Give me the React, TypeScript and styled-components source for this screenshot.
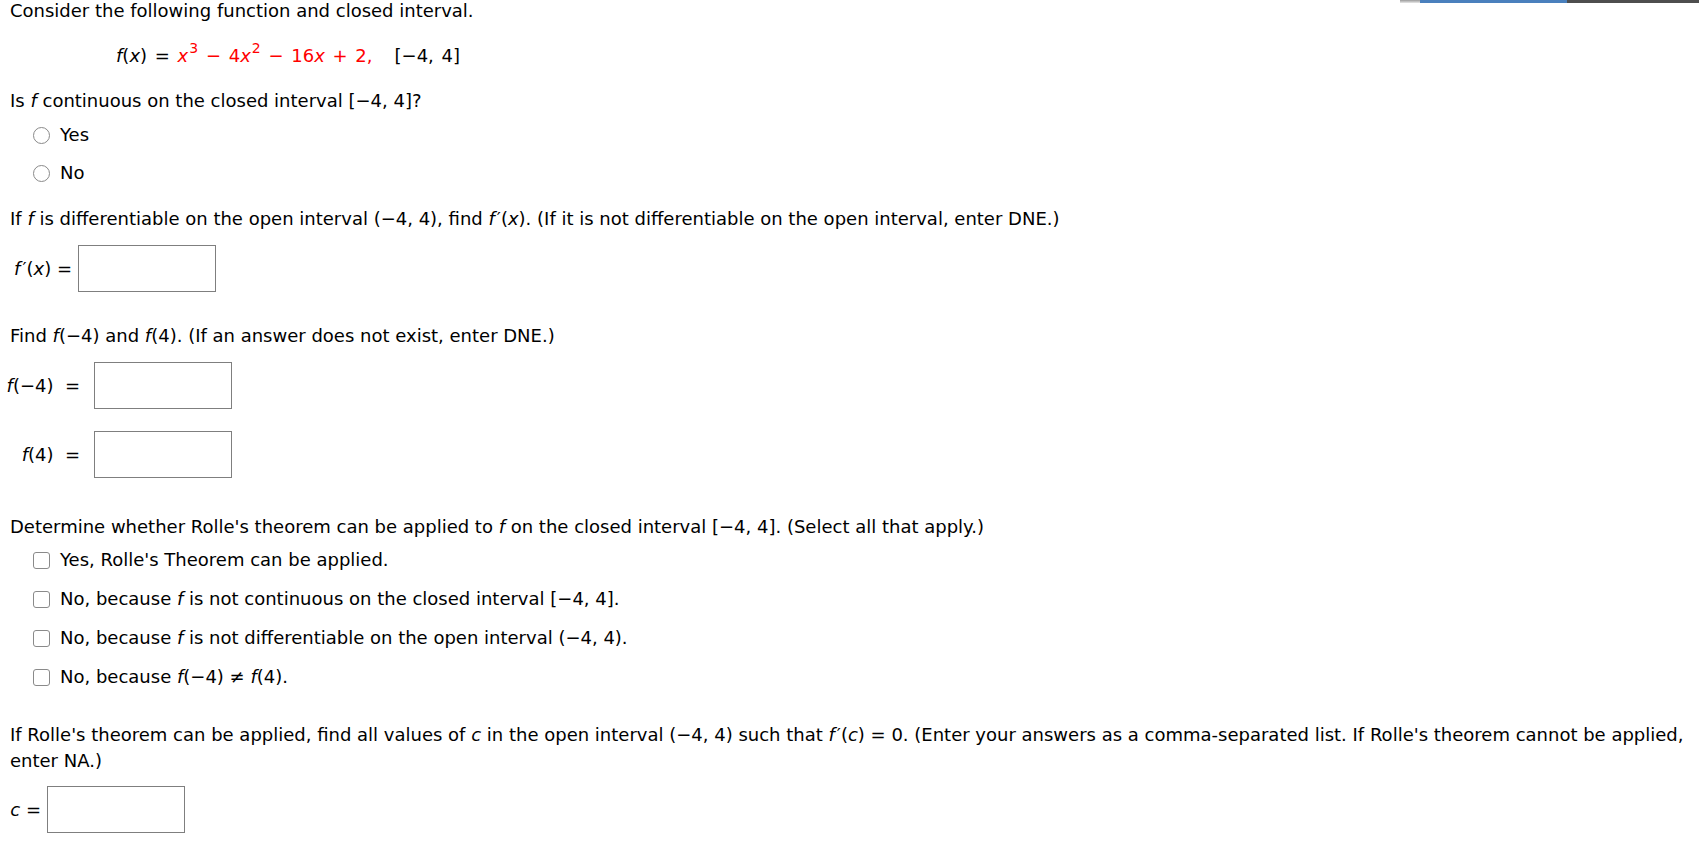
import React from "react";
import styled, { createGlobalStyle } from "styled-components";

const GlobalStyle = createGlobalStyle`
  html, body {
    margin: 0;
    padding: 0;
    background: #fff;
  }
  body {
    font-family: "DejaVu Sans", Verdana, sans-serif;
    font-size: 18px;
    color: #000;
  }
`;

const Page = styled.div`
  position: relative;
  padding: 0 0 0 10px;
  width: 1699px;
  box-sizing: border-box;
`;

const TopStrip = styled.div`
  position: absolute;
  top: 0;
  right: 0;
  display: flex;
  height: 3px;
`;

const StripPart = styled.div<{ $w: number; $c: string }>`
  width: ${(p) => p.$w}px;
  background: ${(p) => p.$c};
`;

const Text = styled.p<{ $mt?: number; $lh?: number }>`
  margin: ${(p) => p.$mt ?? 0}px 0 0 0;
  line-height: ${(p) => p.$lh ?? 22}px;
`;

const Formula = styled.div`
  margin: 23px 0 0 106px;
  line-height: 22px;
  white-space: nowrap;
  word-spacing: 2px;
`;

const Red = styled.span`
  color: #f00;
`;

const Sup = styled.sup`
  font-size: 14px;
  line-height: 0;
  vertical-align: 9px;
  margin-left: 1px;
`;

const Gap = styled.span<{ $w: number }>`
  display: inline-block;
  width: ${(p) => p.$w}px;
`;

const Options = styled.div<{ $mt: number; $gap: number }>`
  display: flex;
  flex-direction: column;
  gap: ${(p) => p.$gap}px;
  margin-top: ${(p) => p.$mt}px;
  padding-left: 23px;
`;

const Option = styled.label`
  display: flex;
  align-items: center;
  gap: 10px;
  height: 24px;
  line-height: 24px;
  white-space: nowrap;
`;

const Radio = styled.span`
  width: 15px;
  height: 15px;
  border: 1.5px solid #8a8a8a;
  border-radius: 50%;
  background: #fff;
  flex: none;
`;

const Check = styled.span`
  width: 15px;
  height: 15px;
  border: 1.5px solid #8a8a8a;
  border-radius: 3px;
  background: #fff;
  flex: none;
`;

const AnswerRow = styled.div<{ $mt: number }>`
  display: flex;
  align-items: center;
  gap: 6px;
  margin-top: ${(p) => p.$mt}px;
`;

const Label = styled.span<{ $w: number; $pr?: number }>`
  width: ${(p) => p.$w}px;
  padding-right: ${(p) => p.$pr ?? 0}px;
  box-sizing: border-box;
  display: flex;
  justify-content: flex-end;
  white-space: pre;
  flex: none;
`;

const Box = styled.div`
  width: 136px;
  height: 45px;
  border: 1px solid #7f7f7f;
  background: #fff;
  flex: none;
`;

const I = styled.i`
  font-style: italic;
`;

const Prime = styled.span`
  margin-left: 2px;
`;

const App: React.FC = () => {
  return (
    <>
      <GlobalStyle />
      <Page>
        <TopStrip>
          <StripPart $w={20} $c="linear-gradient(#9a9a9a, #e8e8e8)" />
          <StripPart $w={147} $c="#4a80bd" />
          <StripPart $w={132} $c="#4e4e4e" />
        </TopStrip>

        <Text>Consider the following function and closed interval.</Text>

        <Formula>
          <I>f</I>(<I>x</I>) = <Red><I>x</I><Sup>3</Sup> − 4<I>x</I><Sup>2</Sup> − 16<I>x</I> + 2,</Red>
          <Gap $w={22} />[−4, 4]
        </Formula>

        <Text $mt={23}>Is <I>f</I> continuous on the closed interval [−4, 4]?</Text>
        <Options $mt={11} $gap={14}>
          <Option><Radio /><span>Yes</span></Option>
          <Option><Radio /><span>No</span></Option>
        </Options>

        <Text $mt={23}>
          If <I>f</I> is differentiable on the open interval (−4, 4), find <I>f</I><Prime>′</Prime>(<I>x</I>). (If it is not differentiable on the open interval, enter DNE.)
        </Text>
        <AnswerRow $mt={15}>
          <Label $w={62}><span><I>f</I><Prime>′</Prime>(<I>x</I>) =</span></Label>
          <Box />
        </AnswerRow>

        <Text $mt={33}>
          Find <I>f</I>(−4) and <I>f</I>(4). (If an answer does not exist, enter DNE.)
        </Text>
        <AnswerRow $mt={15}>
          <Label $w={78} $pr={8}><span><I>f</I>(−4)  =</span></Label>
          <Box />
        </AnswerRow>
        <AnswerRow $mt={22}>
          <Label $w={78} $pr={8}><span><I>f</I>(4)  =</span></Label>
          <Box />
        </AnswerRow>

        <Text $mt={38}>
          Determine whether Rolle's theorem can be applied to <I>f</I> on the closed interval [−4, 4]. (Select all that apply.)
        </Text>
        <Options $mt={10} $gap={15}>
          <Option><Check /><span>Yes, Rolle's Theorem can be applied.</span></Option>
          <Option><Check /><span>No, because <I>f</I> is not continuous on the closed interval [−4, 4].</span></Option>
          <Option><Check /><span>No, because <I>f</I> is not differentiable on the open interval (−4, 4).</span></Option>
          <Option><Check /><span>No, because <I>f</I>(−4) ≠ <I>f</I>(4).</span></Option>
        </Options>

        <Text $mt={33} $lh={26}>
          If Rolle's theorem can be applied, find all values of <I>c</I> in the open interval (−4, 4) such that <I>f</I><Prime>′</Prime>(<I>c</I>) = 0. (Enter your answers as a comma-separated list. If Rolle's theorem cannot be applied, enter NA.)
        </Text>
        <AnswerRow $mt={12}>
          <Label $w={31}><span><I>c</I> =</span></Label>
          <Box />
        </AnswerRow>
      </Page>
    </>
  );
};

export default App;
